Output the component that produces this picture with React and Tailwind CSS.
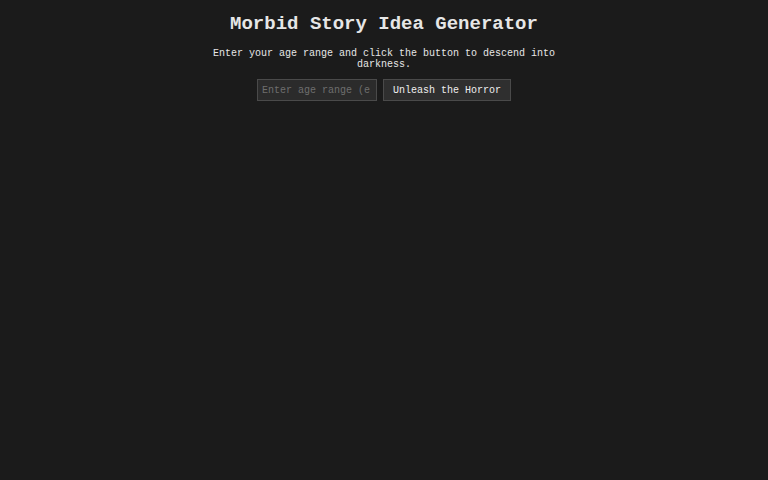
import { useState } from 'react';

export default function App() {
  const [age, setAge] = useState("");

  return (
    <div className="min-h-[480px] w-full bg-[#1b1b1b] text-[#e6e6e6] font-['Liberation_Mono',monospace] flex flex-col items-center pt-[13px]">
      <h1 className="text-[19px] font-bold leading-[22px]">Morbid Story Idea Generator</h1>

      <p className="mt-[13px] max-w-[360px] text-center text-[10px] leading-[11px]">
        Enter your age range and click the button to descend into darkness.
      </p>

      <div className="mt-[9px] flex gap-[6px]">
        <input
          type="text"
          value={age}
          onChange={(e) => setAge(e.target.value)}
          placeholder="Enter age range (e.g. 18-25)"
          className="w-[120px] h-[22px] px-[4px] text-[10px] bg-[#2b2b2b] border border-[#4a4a4a] text-[#ddd] placeholder:text-[#6e6e6e] outline-none"
        />
        <button className="h-[22px] px-[9px] text-[10px] bg-[#2f2f2f] border border-[#4a4a4a] text-[#eee]">
          Unleash the Horror
        </button>
      </div>
    </div>
  );
}
